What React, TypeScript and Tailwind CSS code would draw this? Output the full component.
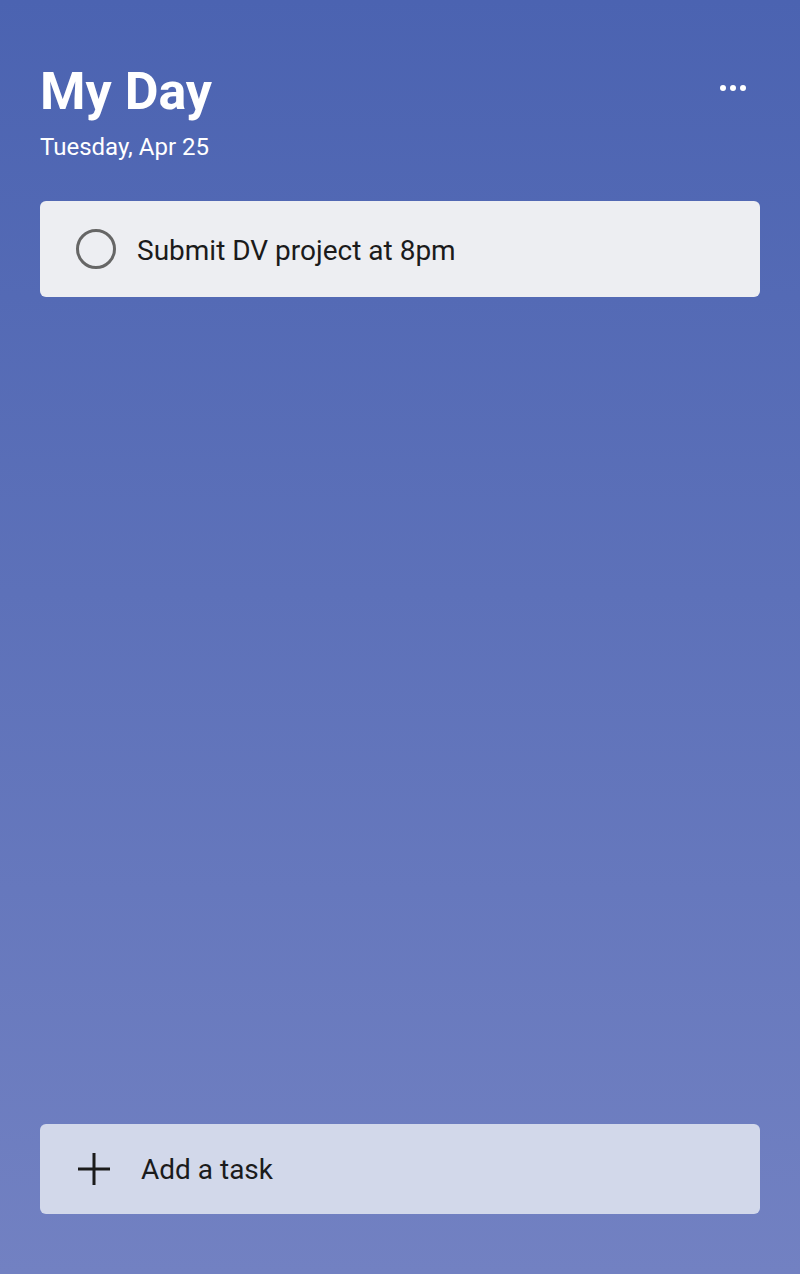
export default function App() {
  return (
    <div
      className="flex h-[1274px] w-full flex-col bg-gradient-to-b from-[#4b63b1] to-[#7281c2] px-10 pb-[60px] pt-[60px]"
      style={{ fontFamily: "Roboto, 'Liberation Sans', sans-serif" }}
    >
      <div className="flex items-start justify-between">
        <div>
          <h1 className="text-[52px] font-bold leading-[64px] text-white">My Day</h1>
          <div className="mt-[8px] text-[24px] leading-[30px] text-white">Tuesday, Apr 25</div>
        </div>
        <button className="mt-[25px] mr-[14px] flex items-center gap-[4px]">
          <span className="h-[6px] w-[6px] rounded-full bg-white" />
          <span className="h-[6px] w-[6px] rounded-full bg-white" />
          <span className="h-[6px] w-[6px] rounded-full bg-white" />
        </button>
      </div>

      <div className="mt-[39px] flex h-[96px] items-center rounded-md bg-[#edeef2] pl-[36px]">
        <span className="h-[40px] w-[40px] rounded-full border-[3px] border-[#666666]" />
        <span className="ml-[21px] pt-[4px] text-[28px] text-[#1b1b1b]">Submit DV project at 8pm</span>
      </div>

      <div className="flex-1" />

      <div className="flex h-[90px] items-center rounded-md bg-[#d2d8ea] pl-[38px]">
        <svg width="32" height="32" viewBox="0 0 32 32" className="text-[#1b1b1b]">
          <path d="M16 0v32M0 16h32" stroke="currentColor" strokeWidth="3" />
        </svg>
        <span className="ml-[31px] pt-[2px] text-[28px] text-[#1b1b1b]">Add a task</span>
      </div>
    </div>
  );
}
